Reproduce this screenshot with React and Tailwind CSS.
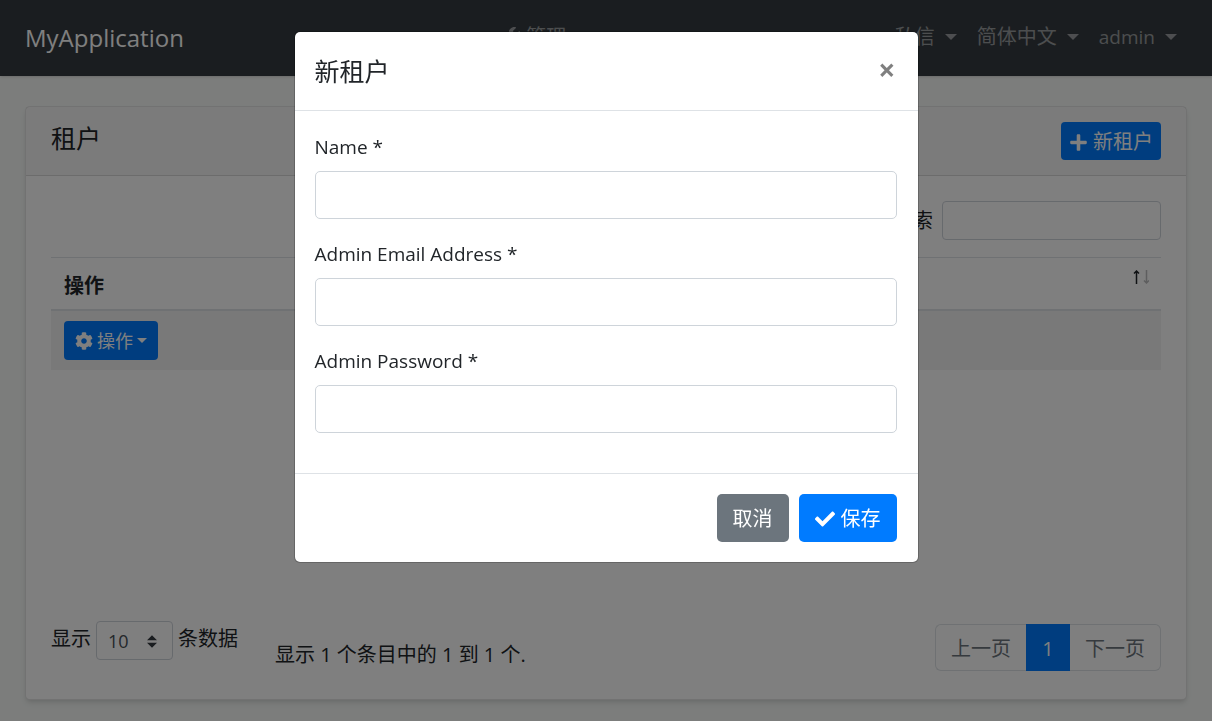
import { FaCheck, FaCog, FaPlus, FaWrench } from "react-icons/fa";

const FIELDS = [
  { id: "name", label: "Name *", type: "text" },
  { id: "email", label: "Admin Email Address *", type: "email" },
  { id: "password", label: "Admin Password *", type: "password" },
];

function Caret() {
  return <span className="inline-block border-x-6 border-t-6 border-x-transparent border-t-current" />;
}

function NavDropdown({ label }) {
  return (
    <button type="button" className="flex items-center gap-2.5 whitespace-nowrap">
      {label}
      <Caret />
    </button>
  );
}

function Navbar() {
  return (
    <header className="flex items-center h-19 px-[25px] bg-[#343a40] text-white/50 shadow">
      <a href="#" className="text-2xl text-white">MyApplication</a>
      <nav className="flex flex-1 items-center justify-between pb-0.5 pl-1.5 pr-2.5">
        <button type="button" className="flex items-center gap-1.5 mx-auto">
          <FaWrench size={20} />
          管理
          <Caret />
        </button>
        <div className="flex items-center gap-5">
          <NavDropdown label="私信" />
          <NavDropdown label="简体中文" />
          <NavDropdown label={<span className="text-[19px]">admin</span>} />
        </div>
      </nav>
    </header>
  );
}

function TenantTable() {
  return (
    <table className="w-full border-separate border-spacing-0">
      <thead>
        <tr>
          <th className="w-1/2 h-[54px] px-[13px] pt-1 text-left font-bold border-t border-b-2 border-[#dee2e6]">操作</th>
          <th className="px-3 align-top text-right border-t border-b-2 border-[#dee2e6]">
            <button type="button" aria-label="排序" className="pt-3">
              <svg width="17" height="14" viewBox="0 0 17 14" fill="none" stroke="currentColor" strokeWidth="1.5">
                <path d="M4.5 14V1.5M2 3.500l2.500-2.500 2.500 2.500" />
                <path d="M14.5 0v12.500M12 10.500l2.500 2.500 2.500-2.500" opacity="0.3" />
              </svg>
            </button>
          </th>
        </tr>
      </thead>
      <tbody>
        <tr className="bg-black/5">
          <td className="px-[13px] py-2.5">
            <button type="button" className="flex items-center h-[39px] px-[11px] gap-1 rounded bg-[#007bff] text-white text-lg">
              <FaCog size={18} />
              操作
              <span className="inline-block border-x-5 border-t-5 border-x-transparent border-t-current" />
            </button>
          </td>
          <td />
        </tr>
      </tbody>
    </table>
  );
}

function TableFooter() {
  return (
    <div className="flex items-start justify-between">
      <div className="flex items-start">
        <label className="flex items-center gap-[5px]">
          <span className="pb-1">显示</span>
          <span className="relative">
            <select defaultValue="10" className="appearance-none block w-[77px] h-[39px] pl-[11px] rounded border border-[#ced4da] bg-white text-[#495057] text-lg">
              <option>10</option>
              <option>25</option>
              <option>50</option>
            </select>
            <svg className="absolute right-4 top-3.5 pointer-events-none" width="10" height="13" viewBox="0 0 4 5" fill="#343a40">
              <path d="M2 0L0 2h4zm0 5L0 3h4z" />
            </svg>
          </span>
          <span className="pb-1">条数据</span>
        </label>
        <p className="ml-[37px] mt-[19px]">显示 1 个条目中的 1 到 1 个.</p>
      </div>
      <div className="flex mt-[3px] h-[47px] text-[#6c757d]">
        <button type="button" className="px-[15px] pt-0.5 rounded-l-md border border-r-0 border-[#dee2e6]">上一页</button>
        <button type="button" className="w-11 pt-0.5 bg-[#007bff] text-white">1</button>
        <button type="button" className="px-[15px] pt-0.5 rounded-r-md border border-l-0 border-[#dee2e6]">下一页</button>
      </div>
    </div>
  );
}

function TenantModal() {
  return (
    <div className="fixed inset-0 flex justify-center items-start pt-[31px] bg-black/50">
      <form role="dialog" aria-labelledby="modal-title" className="w-[625px] rounded-md border border-black/20 bg-white bg-clip-padding">
        <div className="flex items-start justify-between p-5 border-b border-[#dee2e6]">
          <h5 id="modal-title" className="pt-px text-[25px] leading-[37px]">新租户</h5>
          <button type="button" aria-label="关闭" className="mr-0.5 text-[30px] leading-9 font-bold text-black/50">×</button>
        </div>
        <div className="flex flex-col gap-5 pl-5 pr-[21px] pt-[21px] pb-10">
          {FIELDS.map((f) => (
            <div key={f.id}>
              <label htmlFor={f.id} className="block mb-[9px] text-[19px]">{f.label}</label>
              <input id={f.id} type={f.type} className="block w-full h-12 px-4 rounded-[5px] border border-[#ced4da] bg-white" />
            </div>
          ))}
        </div>
        <div className="flex justify-end gap-2.5 pl-5 pr-[21px] py-5 border-t border-[#dee2e6]">
          <button type="button" className="h-12 px-4 pt-0.5 rounded-[5px] bg-[#6c757d] text-white">取消</button>
          <button type="submit" className="flex items-center gap-1.5 h-12 px-4 pt-0.5 rounded-[5px] bg-[#007bff] text-white">
            <FaCheck size={20} />
            保存
          </button>
        </div>
      </form>
    </div>
  );
}

export default function App() {
  return (
    <div className="min-h-screen bg-[#f8fbf9] text-[#212529] text-[20px] leading-[30px] font-['Open_Sans','Noto_Sans_CJK_SC',sans-serif]">
      <Navbar />
      <main className="px-[25px] pt-[30px] pb-5">
        <section className="rounded-[5px] border border-black/10 bg-white shadow-md">
          <div className="flex items-start justify-between px-[25px] py-[15px] bg-black/3 border-b border-black/12">
            <h2 className="pt-px text-[25px]">租户</h2>
            <button type="button" className="flex items-center gap-[5px] h-[38px] px-2 pt-0.5 rounded bg-[#007bff] text-white">
              <FaPlus size={19} />
              新租户
            </button>
          </div>
          <div className="px-[25px] pt-[25px] pb-[28px]">
            <label className="flex items-center justify-end gap-[9px] mb-[17px]">
              搜索
              <input type="search" className="w-[219px] h-[39px] px-2.5 rounded border border-[#ced4da] bg-white" />
            </label>
            <div className="min-h-[364px]">
              <TenantTable />
            </div>
            <TableFooter />
          </div>
        </section>
      </main>
      <TenantModal />
    </div>
  );
}
